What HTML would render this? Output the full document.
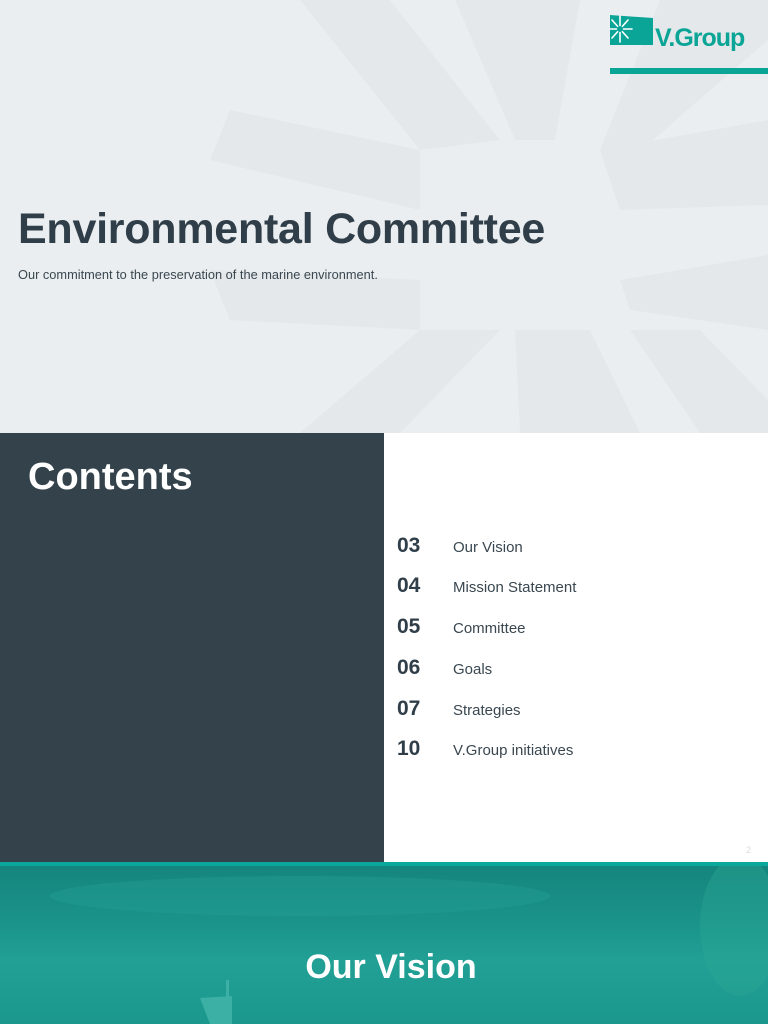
<!DOCTYPE html>
<html><head><meta charset="utf-8">
<style>
*{margin:0;padding:0;box-sizing:border-box}
body{width:768px;height:1024px;overflow:hidden;font-family:"Liberation Sans",sans-serif;background:#fff;position:relative}
.top{position:absolute;left:0;top:0;width:768px;height:433px;background:#ebeef0;overflow:hidden}
.top svg.bg{position:absolute;left:0;top:0}
h1{position:absolute;left:18px;top:205px;font-size:43px;font-weight:bold;color:#2f3e48;letter-spacing:-0.25px}
.sub{position:absolute;left:18px;top:267px;font-size:12.8px;color:#3a4750}
.bar{position:absolute;left:610px;top:68px;width:158px;height:6px;background:#0aa596}
.logo{position:absolute;left:610px;top:14px}
.logotext{position:absolute;left:655px;top:24px;font-size:25px;font-weight:bold;color:#0aa596;letter-spacing:-1px}
.dark{position:absolute;left:0;top:433px;width:384px;height:429px;background:#33424b}
.dark h2{position:absolute;left:28px;top:23px;font-size:38px;color:#fff;font-weight:bold}
.item{position:absolute;left:397px;font-size:15px;color:#3a4750}
.item b{position:absolute;left:0;top:-5px;font-size:21px;color:#2f3e48}
.item span{position:absolute;left:56px;top:0;white-space:nowrap}
.pg{position:absolute;left:746px;top:845px;font-size:9px;color:#d8dcde}
.strip{position:absolute;left:0;top:862px;width:768px;height:4px;background:#0aa89a}
.hero{position:absolute;left:0;top:866px;width:768px;height:158px;background:linear-gradient(180deg,#15857d 0%,#1a938a 35%,#22a095 60%,#1b988e 100%);overflow:hidden}
.hero h3{position:absolute;left:0;width:782px;text-align:center;top:82px;font-size:34px;color:#fff;font-weight:bold}
</style></head><body>
<div class="top">
<svg class="bg" width="768" height="433" viewBox="0 0 768 433">
<g fill="#e5e8ea">
<polygon points="300,0 390,0 500,140 420,150"/>
<polygon points="455,0 580,0 555,140 515,140"/>
<polygon points="660,0 768,0 768,40 630,160 600,150"/>
<polygon points="230,110 420,150 420,210 210,160"/>
<polygon points="600,150 768,120 768,205 620,210"/>
<polygon points="210,270 420,280 420,330 230,320"/>
<polygon points="620,280 768,255 768,330 630,310"/>
<polygon points="420,330 500,330 400,433 300,433"/>
<polygon points="515,330 590,330 640,433 520,433"/>
<polygon points="630,330 700,330 768,400 768,433 700,433"/>
</g>
</svg>
<h1>Environmental Committee</h1>
<div class="sub">Our commitment to the preservation of the marine environment.</div>
<svg class="logo" width="44" height="34" viewBox="0 0 44 34">
<polygon points="0,1 43,4 43,31 0,31" fill="#0aa596"/>
<g stroke="#fff" stroke-width="1.6" stroke-linecap="round">
<line x1="10" y1="2" x2="10" y2="28"/><line x1="0" y1="15" x2="22" y2="15"/>
<line x1="2" y1="6" x2="18" y2="24"/><line x1="18" y1="6" x2="2" y2="24"/>
</g><circle cx="10" cy="15" r="3" fill="#0aa596"/>
</svg>
<div class="logotext">V.Group</div>
<div class="bar"></div>
</div>
<div class="dark"><h2>Contents</h2></div>
<div class="item" style="top:539px"><b>03</b><span>Our Vision</span></div>
<div class="item" style="top:579px"><b>04</b><span>Mission Statement</span></div>
<div class="item" style="top:620px"><b>05</b><span>Committee</span></div>
<div class="item" style="top:661px"><b>06</b><span>Goals</span></div>
<div class="item" style="top:702px"><b>07</b><span>Strategies</span></div>
<div class="item" style="top:742px"><b>10</b><span>V.Group initiatives</span></div>
<div class="pg">2</div>
<div class="strip"></div>
<div class="hero">
<svg width="768" height="158" style="position:absolute;left:0;top:0">
<ellipse cx="740" cy="60" rx="40" ry="70" fill="#2aa893" opacity="0.4"/>
<ellipse cx="300" cy="30" rx="250" ry="20" fill="#28a59a" opacity="0.3"/>
<polygon points="200,132 232,130 232,158 210,158" fill="#3cb0a4"/>
<rect x="226" y="114" width="3" height="18" fill="#3cb0a4"/>
</svg>
<h3>Our Vision</h3>
</div>
</body></html>
